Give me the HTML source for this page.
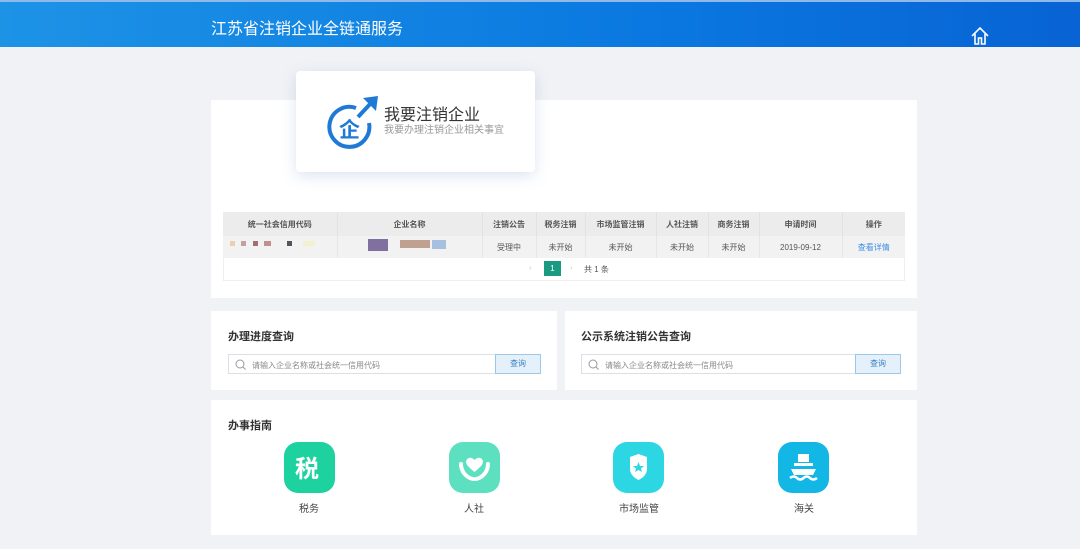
<!DOCTYPE html>
<html><head><meta charset="utf-8"><style>
*{margin:0;padding:0;box-sizing:border-box}
body{width:1080px;height:549px;background:#f0f2f5;font-family:"Liberation Sans","Noto Sans CJK SC",sans-serif;position:relative;overflow:hidden;color:#333}
.hdr{position:absolute;left:0;top:0;width:1080px;height:47px;background:linear-gradient(90deg,#1d93e6,#0a78e0 60%,#0863d4);border-top:2px solid #8fb9e8}
.hdr .t{position:absolute;left:211px;top:13px;color:#fff;font-size:16px}
.card{position:absolute;background:#fff}
.pop{position:absolute;left:296px;top:71px;width:239px;height:101px;background:#fff;border-radius:4px;box-shadow:0 4px 14px rgba(120,150,200,.25)}
table{position:absolute;left:223px;top:212px;width:682px;border-collapse:collapse;font-size:8px;color:#555;text-align:center}
th{background:#ececec;height:24px;font-weight:bold;border-right:1px solid #e2e2e2}
td{background:#f2f2f2;height:22px;border-right:1px solid #e6e6e6}
.pg{position:absolute;left:223px;top:258px;width:682px;height:23px;border:1px solid #eee;border-top:none;font-size:8px;color:#555}
.sq{position:absolute;width:3px;height:3px}
.h3{position:absolute;font-size:11px;font-weight:bold;color:#333}
.inp{position:absolute;height:20px;border:1px solid #dcdfe6;background:#fff;font-size:8px;color:#888}
.btn{position:absolute;right:-1px;top:-1px;width:46px;height:20px;background:#e4f1fb;border:1px solid #9cc7e8;color:#3a7fc1;text-align:center;line-height:18px}
.ic{position:absolute;top:442px;width:51px;height:51px;border-radius:14px}
.lb{position:absolute;top:500px;font-size:10px;width:100px;text-align:center;color:#444}
</style></head><body>
<div class="hdr"><div class="t">江苏省注销企业全链通服务</div>
<svg style="position:absolute;left:970px;top:24px" width="20" height="20" viewBox="0 0 20 20" fill="none" stroke="#fff" stroke-width="1.6"><path d="M2 10 L10 2 L18 10 M5 8 V18 H8.5 V12 H11.5 V18 H15 V8"/></svg></div>
<div class="card" style="left:211px;top:100px;width:706px;height:198px"></div>
<div class="pop">
<svg style="position:absolute;left:20px;top:22px" width="66" height="66" viewBox="0 0 66 66"><path d="M40 15 A20 20 0 1 0 53 30" fill="none" stroke="#1f7ad6" stroke-width="4"/><path d="M42 24 L56 9" stroke="#1f7ad6" stroke-width="4"/><path d="M47 5 L62 3 L60 18 Z" fill="#1f7ad6"/><text x="23" y="44" font-size="21" font-weight="bold" fill="#1f7ad6" font-family="Noto Sans CJK SC,sans-serif">企</text></svg>
<div style="position:absolute;left:88px;top:30px;font-size:16px;color:#333">我要注销企业</div>
<div style="position:absolute;left:88px;top:50px;font-size:10px;color:#999">我要办理注销企业相关事宜</div>
</div>
<table><tr><th style="width:114px">统一社会信用代码</th><th style="width:145px">企业名称</th><th style="width:54px">注销公告</th><th style="width:49px">税务注销</th><th style="width:71px">市场监管注销</th><th style="width:52px">人社注销</th><th style="width:51px">商务注销</th><th style="width:83px">申请时间</th><th style="border:none">操作</th></tr>
<tr><td></td><td></td><td>受理中</td><td>未开始</td><td>未开始</td><td>未开始</td><td>未开始</td><td>2019-09-12</td><td style="color:#3a8ee6;border:none">查看详情</td></tr></table>
<div class="sq" style="left:230px;top:241px;width:5px;height:5px;background:#e8d0b0"></div>
<div class="sq" style="left:241px;top:241px;width:5px;height:5px;background:#c5a0a0"></div>
<div class="sq" style="left:253px;top:241px;width:5px;height:5px;background:#a07070"></div>
<div class="sq" style="left:264px;top:241px;width:7px;height:5px;background:#c09090"></div>
<div class="sq" style="left:287px;top:241px;width:5px;height:5px;background:#555"></div>
<div class="sq" style="left:303px;top:241px;width:12px;height:5px;background:#f3f0d0"></div>
<div class="sq" style="left:368px;top:239px;width:20px;height:12px;background:#8070a0"></div>
<div class="sq" style="left:400px;top:240px;width:30px;height:8px;background:#c0a090"></div>
<div class="sq" style="left:432px;top:240px;width:14px;height:9px;background:#a8c0e0"></div>
<div class="pg"><span style="position:absolute;left:305px;top:5px;color:#ccc">‹</span><span style="position:absolute;left:320px;top:3px;width:17px;height:15px;background:#1a9a80;color:#fff;text-align:center;line-height:15px">1</span><span style="position:absolute;left:346px;top:5px;color:#ccc">›</span><span style="position:absolute;left:360px;top:6px">共 1 条</span></div>
<div class="card" style="left:211px;top:311px;width:346px;height:79px"></div>
<div class="card" style="left:565px;top:311px;width:352px;height:79px"></div>
<div class="h3" style="left:228px;top:328px">办理进度查询</div>
<div class="h3" style="left:581px;top:328px">公示系统注销公告查询</div>
<div class="inp" style="left:228px;top:354px;width:313px"><svg style="position:absolute;left:6px;top:4px" width="11" height="11"><circle cx="5" cy="5" r="4" fill="none" stroke="#999"/><path d="M8 8 L10.5 10.5" stroke="#999"/></svg><span style="position:absolute;left:23px;top:5px">请输入企业名称或社会统一信用代码</span><div class="btn">查询</div></div>
<div class="inp" style="left:581px;top:354px;width:320px"><svg style="position:absolute;left:6px;top:4px" width="11" height="11"><circle cx="5" cy="5" r="4" fill="none" stroke="#999"/><path d="M8 8 L10.5 10.5" stroke="#999"/></svg><span style="position:absolute;left:23px;top:5px">请输入企业名称或社会统一信用代码</span><div class="btn">查询</div></div>
<div class="card" style="left:211px;top:400px;width:706px;height:135px"></div>
<div class="h3" style="left:228px;top:417px">办事指南</div>
<div class="ic" style="left:284px;background:#1ed2a0"><span style="position:absolute;left:11px;top:11px;color:#fff;font-size:24px;font-weight:bold;font-family:'Noto Sans CJK SC',sans-serif;line-height:28px">税</span></div>
<div class="ic" style="left:449px;background:#5ce0bf"><svg width="51" height="51" viewBox="0 0 51 51"><path d="M25.5 30 C18 24 16 21 17.5 18 C19 15 23 15 25.5 18 C28 15 32 15 33.5 18 C35 21 33 24 25.5 30Z" fill="#fff"/><path d="M12 22 C12 30 18 36 24 37 M39 22 C39 30 33 36 27 37" stroke="#fff" stroke-width="4" fill="none" stroke-linecap="round"/></svg></div>
<div class="ic" style="left:613px;background:#2dd6e3"><svg width="51" height="51" viewBox="0 0 51 51"><path d="M17 15 L25.5 12 L34 15 V27 C34 32 30 36 25.5 38 C21 36 17 32 17 27Z" fill="#fff"/><path d="M25.5 20 L27 24 L31 24 L28 26.5 L29 30 L25.5 28 L22 30 L23 26.5 L20 24 L24 24Z" fill="#2dd6e3"/></svg></div>
<div class="ic" style="left:778px;background:#13b7e6"><svg width="51" height="51" viewBox="0 0 51 51"><rect x="20" y="12" width="11" height="8" fill="#fff"/><rect x="16" y="21" width="19" height="3" fill="#fff"/><path d="M13 27 H38 L35 33 H16Z" fill="#fff"/><path d="M12 36 Q16 33 19 36 Q22 39 25.5 36 Q29 33 32 36 Q35 39 39 36" stroke="#fff" stroke-width="2.5" fill="none"/></svg></div>
<div class="lb" style="left:259px">税务</div>
<div class="lb" style="left:424px">人社</div>
<div class="lb" style="left:589px">市场监管</div>
<div class="lb" style="left:754px">海关</div>
</body></html>
